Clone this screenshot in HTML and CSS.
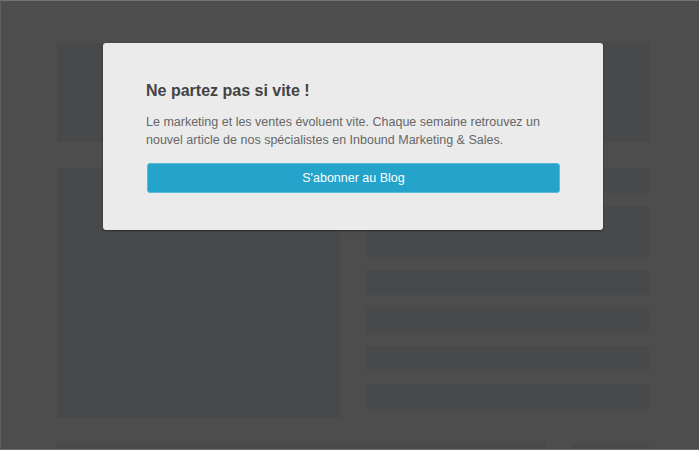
FILE: index.html
```html
<!DOCTYPE html>
<html lang="fr">
<head>
<meta charset="utf-8">
<title>Ne partez pas si vite !</title>
<link rel="stylesheet" href="styles.css">
</head>
<body>
<div class="page">
  <div class="block hero"></div>
  <div class="columns">
    <div class="block main"></div>
    <div class="side">
      <div class="block row"></div>
      <div class="block row tall"></div>
      <div class="block row"></div>
      <div class="block row"></div>
      <div class="block row"></div>
      <div class="block row"></div>
    </div>
  </div>
  <div class="footer">
    <div class="block foot-a"></div>
    <div class="block foot-b"></div>
  </div>
</div>

<div class="modal">
  <h2 class="modal-title">Ne partez pas si vite !</h2>
  <p class="modal-text">Le marketing et les ventes évoluent vite. Chaque semaine retrouvez un nouvel article de nos spécialistes en Inbound Marketing &amp; Sales.</p>
  <a class="modal-button" href="#">S'abonner au Blog</a>
</div>
</body>
</html>
```

FILE: styles.css
```css
html, body {
  margin: 0;
  padding: 0;
}

body {
  height: 450px;
  box-sizing: border-box;
  overflow: hidden;
  background: #4d4d4d;
  border-top: 1px solid #737373;
  border-left: 1px solid #5e5e5e;
  border-bottom: 1px solid #6e6e6e;
  font-family: "Liberation Sans", Arial, sans-serif;
  position: relative;
}

.page {
  padding: 42px 49px 0 56px;
  display: flex;
  flex-direction: column;
}

.block {
  background: #48494b;
}

.hero {
  height: 99px;
}

.columns {
  margin-top: 26px;
  display: flex;
  gap: 26px;
}

.main {
  width: 283px;
  height: 250px;
}

.side {
  width: 283px;
  display: flex;
  flex-direction: column;
  gap: 13px;
}

.row {
  height: 25px;
}

.row.tall {
  height: 51px;
}

.footer {
  margin-top: 25px;
  display: flex;
  gap: 26px;
}

.foot-a {
  width: 489px;
  height: 20px;
}

.foot-b {
  width: 77px;
  height: 20px;
}

.modal {
  position: absolute;
  left: 102px;
  top: 42px;
  width: 500px;
  height: 187px;
  box-sizing: border-box;
  padding: 38px 43px 0 43px;
  background: #ebebeb;
  border-radius: 3px;
  box-shadow: 0 1px 2px rgba(0, 0, 0, 0.45);
}

.modal-title {
  margin: 0;
  font-size: 16px;
  line-height: 20px;
  font-weight: bold;
  color: #434343;
}

.modal-text {
  margin: 12px 0 0 0;
  font-size: 12.5px;
  line-height: 18px;
  color: #676767;
}

.modal-button {
  display: block;
  margin-top: 14px;
  margin-left: 1px;
  height: 30px;
  box-sizing: border-box;
  line-height: 28px;
  text-align: center;
  font-size: 12.5px;
  color: #ffffff;
  text-decoration: none;
  background: #24a3cb;
  border: 1px solid #5bb9d8;
  border-radius: 3px;
}
```
